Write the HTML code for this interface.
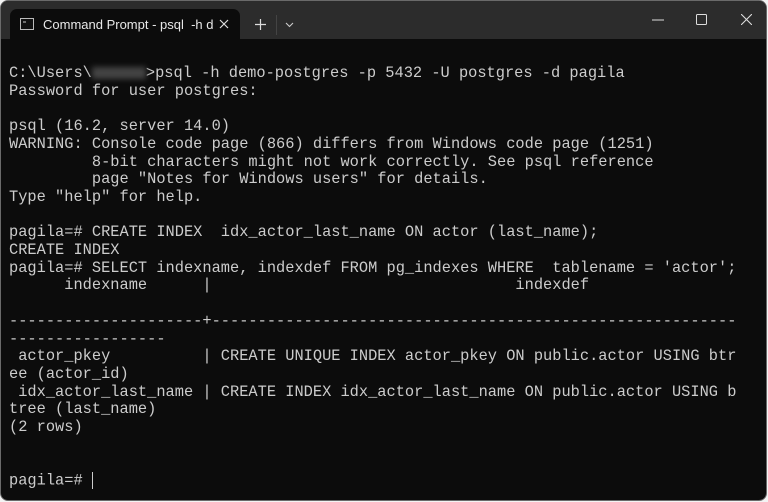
<!DOCTYPE html>
<html><head><style>
body{margin:0;width:768px;height:502px;background:#f3f3f3;overflow:hidden}
.win{position:absolute;left:0;top:0;width:767px;height:501px;background:#0c0c0c;border:1px solid #6a6a6a;border-radius:8px;overflow:hidden;box-sizing:border-box}
.bar{position:absolute;left:0;top:0;right:0;height:38px;background:#2c2c2c}
.tab{position:absolute;left:9px;top:8px;width:230px;height:31px;background:#0c0c0c;border-radius:7px 7px 0 0}
.tt{position:absolute;left:33px;top:8px;font:13px "Liberation Sans",sans-serif;color:#e8e8e8;white-space:nowrap}
pre{position:absolute;left:8px;top:64px;margin:0;font:15.35px/17.7px "Liberation Mono",monospace;color:#cccccc}
.blur{display:inline-block;width:54px;height:12px;background:#444;filter:blur(3px);vertical-align:middle}
</style></head><body>
<div class="win">
<div class="bar"></div>
<div class="tab">
<svg style="position:absolute;left:10px;top:9px" width="14" height="12"><rect x="0.5" y="0.5" width="13" height="11" fill="#111" stroke="#bbb"/><path d="M3 4h3" stroke="#ccc"/></svg>
<div class="tt">Command Prompt - psql&nbsp; -h d</div>
<svg style="position:absolute;left:209px;top:10px" width="10" height="10"><path d="M1 1L9 9M9 1L1 9" stroke="#ddd" stroke-width="1.2"/></svg>
</div>
<svg style="position:absolute;left:254px;top:18px" width="11" height="11"><path d="M5.5 0v11M0 5.5h11" stroke="#ddd" stroke-width="1.2"/></svg>
<div style="position:absolute;left:275px;top:14px;width:1px;height:20px;background:#444"></div>
<svg style="position:absolute;left:284px;top:21px" width="9" height="6"><path d="M1 1l3.5 3.5L8 1" stroke="#ccc" fill="none" stroke-width="1.1"/></svg>
<svg style="position:absolute;left:651px;top:18px" width="12" height="2"><path d="M0 1h12" stroke="#ddd"/></svg>
<svg style="position:absolute;left:695px;top:13px" width="11" height="11"><rect x="0.5" y="0.5" width="10" height="10" rx="1" fill="none" stroke="#ddd"/></svg>
<svg style="position:absolute;left:740px;top:13px" width="11" height="11"><path d="M0 0L11 11M11 0L0 11" stroke="#ddd" stroke-width="1.1"/></svg>
<pre>C:\Users\<span class="blur"></span>>psql -h demo-postgres -p 5432 -U postgres -d pagila
Password for user postgres:

psql (16.2, server 14.0)
WARNING: Console code page (866) differs from Windows code page (1251)
         8-bit characters might not work correctly. See psql reference
         page "Notes for Windows users" for details.
Type "help" for help.

pagila=# CREATE INDEX  idx_actor_last_name ON actor (last_name);
CREATE INDEX
pagila=# SELECT indexname, indexdef FROM pg_indexes WHERE  tablename = 'actor';
      indexname      |                                 indexdef

---------------------+---------------------------------------------------------
-----------------
 actor_pkey          | CREATE UNIQUE INDEX actor_pkey ON public.actor USING btr
ee (actor_id)
 idx_actor_last_name | CREATE INDEX idx_actor_last_name ON public.actor USING b
tree (last_name)
(2 rows)


pagila=# <span style="display:inline-block;width:1px;height:17px;background:#ccc;vertical-align:middle"></span></pre>
</div>
</body></html>
